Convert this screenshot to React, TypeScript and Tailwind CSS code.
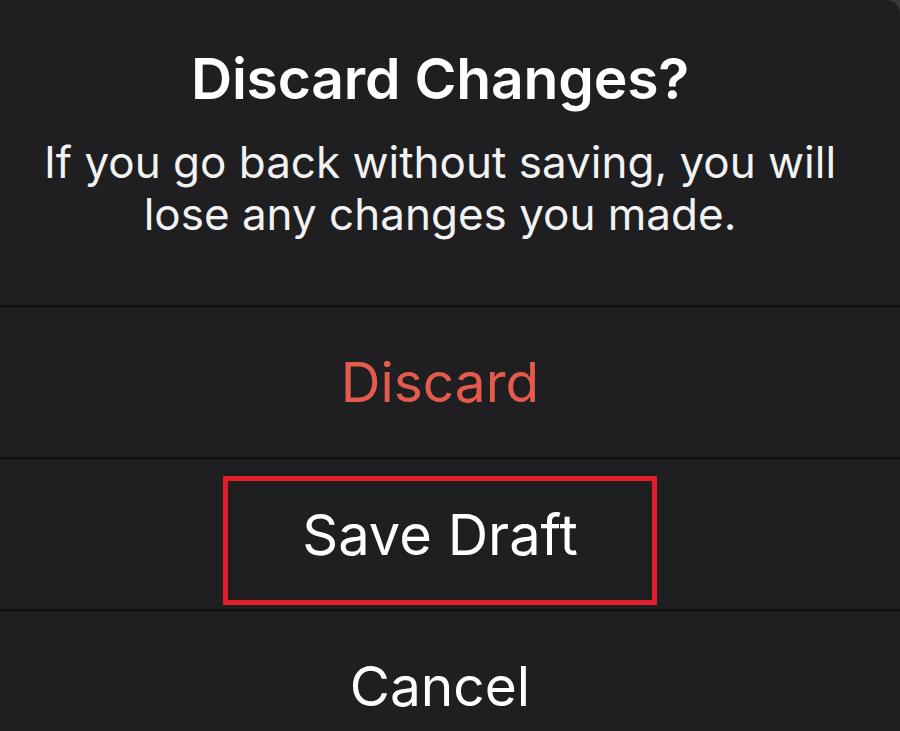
export default function App() {
  const font = { fontFamily: "Inter, 'Noto Sans', sans-serif" };

  return (
    <div className="h-[731px] w-[900px] overflow-hidden bg-[#3a3a3c]" style={font}>
      <div className="h-full w-full rounded-tr-[14px] bg-[#1f1f21]">
        <div className="flex h-[305px] flex-col items-center pr-[20px] pt-[45px] text-center text-white">
          <h1 className="text-[57px] font-semibold leading-[68px] tracking-[-0.2px]">
            Discard Changes?
          </h1>
          <p className="mt-[23px] text-[44px] leading-[52px] text-[#f2f2f2]">
            If you go back without saving, you will
            <br />
            lose any changes you made.
          </p>
        </div>

        <div className="h-[2px] bg-[#101011]" />
        <button
          type="button"
          className="flex h-[150px] w-full items-center justify-center pr-[20px] text-[55px] text-[#e45a4c]"
        >
          Discard
        </button>

        <div className="h-[2px] bg-[#101011]" />
        <div className="flex h-[150px] w-full justify-center pr-[20px] pt-[17px]">
          <button
            type="button"
            className="flex h-[129px] w-[434px] items-center justify-center border-[5px] border-[#e31e2a] pb-[12px] text-[56px] text-white"
          >
            Save Draft
          </button>
        </div>

        <div className="h-[2px] bg-[#101011]" />
        <button
          type="button"
          className="flex h-[150px] w-full items-center justify-center pr-[20px] text-[55px] text-white"
        >
          Cancel
        </button>
      </div>
    </div>
  );
}
